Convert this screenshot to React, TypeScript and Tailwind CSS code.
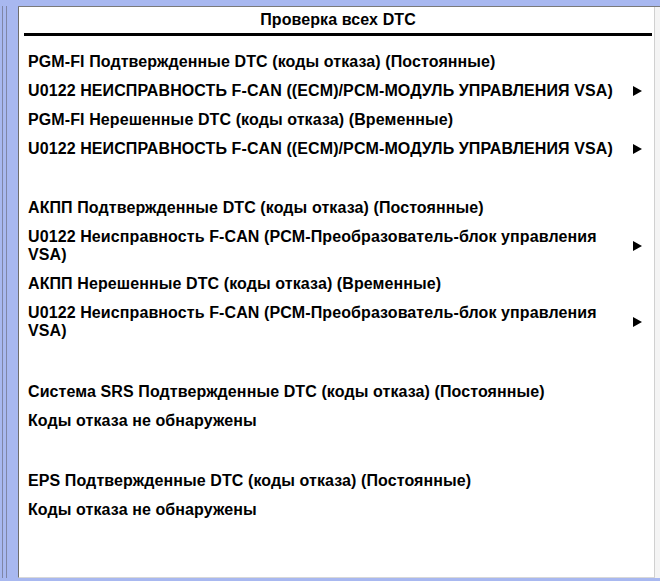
import React from "react";

type Item = { text: string; arrow?: boolean };

const sections: Item[][] = [
  [
    { text: "PGM-FI Подтвержденные DTC (коды отказа) (Постоянные)" },
    { text: "U0122 НЕИСПРАВНОСТЬ F-CAN ((ECM)/PCM-МОДУЛЬ УПРАВЛЕНИЯ VSA)", arrow: true },
    { text: "PGM-FI Нерешенные DTC (коды отказа) (Временные)" },
    { text: "U0122 НЕИСПРАВНОСТЬ F-CAN ((ECM)/PCM-МОДУЛЬ УПРАВЛЕНИЯ VSA)", arrow: true },
  ],
  [
    { text: "АКПП Подтвержденные DTC (коды отказа) (Постоянные)" },
    { text: "U0122 Неисправность F-CAN (PCM-Преобразователь-блок управления VSA)", arrow: true },
    { text: "АКПП Нерешенные DTC (коды отказа) (Временные)" },
    { text: "U0122 Неисправность F-CAN (PCM-Преобразователь-блок управления VSA)", arrow: true },
  ],
  [
    { text: "Система SRS Подтвержденные DTC (коды отказа) (Постоянные)" },
    { text: "Коды отказа не обнаружены" },
  ],
  [
    { text: "EPS Подтвержденные DTC (коды отказа) (Постоянные)" },
    { text: "Коды отказа не обнаружены" },
  ],
];

const spacerClass = ["", "mt-[30px]", "mt-[32px]", "mt-[31px]"];

function Arrow() {
  return (
    <svg width="9" height="10" viewBox="0 0 9 10" className="block">
      <polygon points="0,0 9,5 0,10" fill="#000" />
    </svg>
  );
}

export default function App() {
  return (
    <div
      className="w-[660px] h-[581px] bg-[#a8b8f0] flex flex-col overflow-hidden"
      style={{ fontFamily: '"Liberation Sans", Arial, sans-serif' }}
    >
      <div className="h-[6px] shrink-0" />
      <div className="flex flex-1 min-h-0">
        {/* left strip */}
        <div className="flex w-[18px] shrink-0">
          <div className="w-[2px]" />
          <div className="w-[1px] bg-[#7f86a6]" />
          <div className="w-[3px]" />
          <div className="w-[1px] bg-[#7f86a6]" />
        </div>
        {/* panel */}
        <div className="flex-1 flex bg-[#f4f4f4] border-t border-[#7a7a7a]">
          <div className="w-[637px] bg-white border-l border-l-[#6e6e6e] border-r border-r-[#d0d0d0] border-b border-b-[#d8d8d8] flex flex-col text-black font-bold text-[16px] leading-[18px] tracking-[0.1px]">
            <div className="pt-[4px] pl-[5px] pr-[2px]">
              <div className="text-center">Проверка всех DTC</div>
              <div className="mt-[4px] h-[3px] bg-black" />
            </div>
            <div className="pt-[11px] pl-[9px]">
              {sections.map((sec, si) => (
                <div key={si} className={spacerClass[si]}>
                  {sec.map((it, ii) => (
                    <div key={ii} className="flex items-center pt-[6px] pb-[5px]">
                      <div className="w-[595px]">{it.text}</div>
                      {it.arrow && (
                        <div className="ml-[10px]">
                          <Arrow />
                        </div>
                      )}
                    </div>
                  ))}
                </div>
              ))}
            </div>
          </div>
        </div>
      </div>
      <div className="h-[3px] shrink-0" />
    </div>
  );
}
